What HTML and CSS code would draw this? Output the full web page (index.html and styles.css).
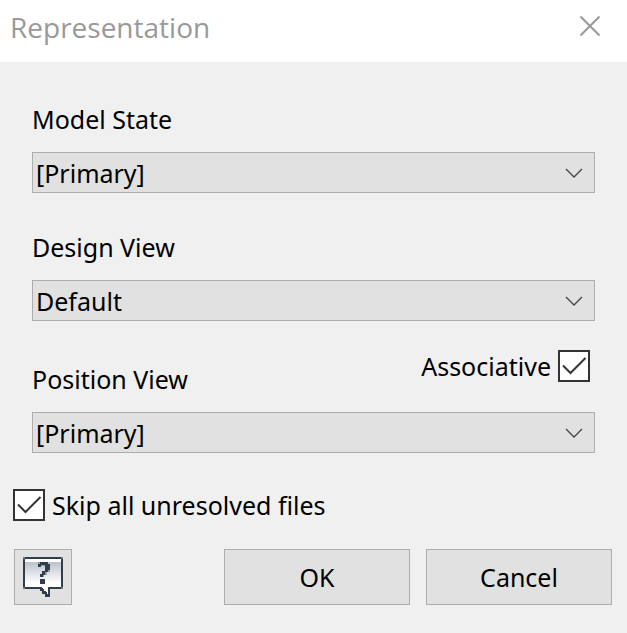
FILE: index.html
```html
<!DOCTYPE html>
<html lang="en">
<head>
<meta charset="utf-8">
<meta name="viewport" content="width=device-width, initial-scale=1">
<title>Representation</title>
<link rel="stylesheet" href="styles.css">
</head>
<body>
<form class="dialog">
  <header class="titlebar">
    <h1 class="title">Representation</h1>
    <button class="close" type="button" aria-label="Close">
      <svg width="20" height="20" viewBox="0 0 20 20"><path d="M0.5 0.5 19.5 19.5M19.5 0.5 0.5 19.5"/></svg>
    </button>
  </header>
  <main class="fields">
    <div class="field">
      <label class="label" for="model">Model State</label>
      <div class="picker">
        <select class="select" id="model"><option>[Primary]</option></select>
        <svg class="chevron" width="18" height="10" viewBox="0 0 18 10"><path d="M1 1 9 9 17 1"/></svg>
      </div>
    </div>
    <div class="field">
      <label class="label" for="design">Design View</label>
      <div class="picker">
        <select class="select" id="design"><option>Default</option></select>
        <svg class="chevron" width="18" height="10" viewBox="0 0 18 10"><path d="M1 1 9 9 17 1"/></svg>
      </div>
    </div>
    <label class="check associative">
      <span>Associative</span>
      <span class="tick"><input class="box" type="checkbox" checked><svg class="mark" width="32" height="32" viewBox="0 0 32 32"><path d="M5 15.5 12.5 23 27.5 8"/></svg></span>
    </label>
    <div class="field">
      <label class="label" for="position">Position View</label>
      <div class="picker">
        <select class="select" id="position"><option>[Primary]</option></select>
        <svg class="chevron" width="18" height="10" viewBox="0 0 18 10"><path d="M1 1 9 9 17 1"/></svg>
      </div>
    </div>
  </main>
  <label class="check skip">
    <span class="tick"><input class="box" type="checkbox" checked><svg class="mark" width="32" height="32" viewBox="0 0 32 32"><path d="M5 15.5 12.5 23 27.5 8"/></svg></span>
    <span>Skip all unresolved files</span>
  </label>
  <footer class="actions">
    <button class="button help" type="button" aria-label="Help">
      <svg width="40" height="40" viewBox="0 0 40 40" shape-rendering="crispEdges">
        <defs><linearGradient id="sheen" x1="0" y1="0" x2="0" y2="1"><stop offset="0" stop-color="#bcc1cb"/><stop offset="1" stop-color="#fff"/></linearGradient></defs>
        <path class="bubble" d="M1 1H39V31H26V39H23V36H20V33H18V31H1Z"/>
        <path fill="url(#sheen)" d="M2 5H38V26H2Z"/>
        <path class="shade" d="M15 5H25V8H27V15H24V18H21V20H17V17H20V14H23V9H18V10H15Z"/>
        <path class="ink" d="M17 5H25V7H27V13H25V15H22V18H20V20H17V17H19V14H22V8H18V10H15V7H17Z"/>
        <path class="ink" d="M17 22H22V27H17Z"/>
        <path class="ink" d="M17 31H20V34H17ZM20 34H23V37H20ZM22 37H27V40H22Z"/>
        <path class="corner" d="M0 0H2V2H0ZM38 0H40V2H38ZM0 30H2V32H0ZM38 30H40V32H38Z"/>
      </svg>
    </button>
    <button class="button" type="submit">OK</button>
    <button class="button" type="button">Cancel</button>
  </footer>
</form>
</body>
</html>
```
FILE: styles.css
```css
* {
  box-sizing: border-box;
}

body {
  margin: 0;
  background: #f0f0f0;
  color: #000;
  font: 25px/32px "Noto Sans", "Open Sans", sans-serif;
}

.titlebar {
  display: flex;
  align-items: flex-start;
  justify-content: space-between;
  height: 62px;
  padding: 8px 27px 0 10px;
  background: #fff;
}

.title {
  margin: 0;
  color: #999;
  font: 400 28px/38px "Open Sans", "Noto Sans", sans-serif;
}

.close {
  display: flex;
  margin-top: 8px;
  padding: 0;
  border: 0;
  background: none;
}

.close path {
  fill: none;
  stroke: #999;
  stroke-width: 2;
}

.fields {
  display: flex;
  flex-direction: column;
  padding: 41px 32px 0;
}

.field {
  margin-bottom: 38px;
}

.label {
  display: block;
  margin-bottom: 17px;
}

.picker {
  display: grid;
  align-items: center;
}

.select {
  grid-area: 1 / 1;
  width: 100%;
  height: 41px;
  padding: 0 3px;
  border: 1px solid #adadad;
  border-radius: 0;
  background: #e1e1e1;
  color: inherit;
  font: inherit;
  appearance: none;
}

.chevron {
  grid-area: 1 / 1;
  justify-self: end;
  margin-right: 12px;
  fill: none;
  stroke: #444;
  stroke-width: 1.3;
  pointer-events: none;
}

.check {
  display: flex;
  align-items: center;
  gap: 7px;
}

.associative {
  align-self: flex-end;
  margin: -9px 5px -19px 0;
}

.skip {
  width: fit-content;
  margin: -2px 0 0 13px;
}

.tick {
  display: grid;
}

.box {
  grid-area: 1 / 1;
  width: 32px;
  height: 32px;
  margin: 0;
  border: 2px solid #333;
  background: #fff;
  appearance: none;
}

.mark {
  grid-area: 1 / 1;
  visibility: hidden;
  fill: none;
  stroke: #333;
  stroke-width: 2;
  pointer-events: none;
}

.box:checked + .mark {
  visibility: visible;
}

.actions {
  display: flex;
  gap: 16px;
  padding: 28px 15px 28px 14px;
}

.button {
  width: 186px;
  height: 56px;
  padding: 0;
  border: 1px solid #adadad;
  background: #e1e1e1;
  color: inherit;
  font: inherit;
}

.help {
  display: flex;
  align-items: center;
  justify-content: center;
  width: 58px;
  margin-right: auto;
}

.bubble {
  fill: #fff;
  stroke: #333d49;
  stroke-width: 2;
}

.ink {
  fill: #333d49;
}

.shade {
  fill: #959ba5;
}

.corner {
  fill: #777;
}
```
